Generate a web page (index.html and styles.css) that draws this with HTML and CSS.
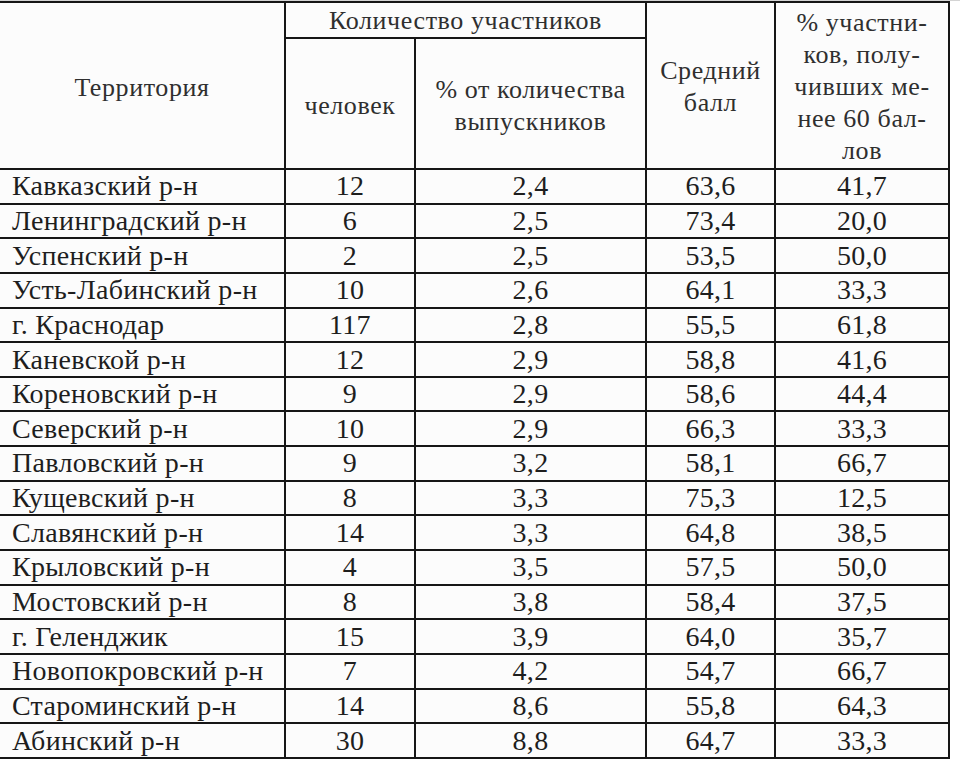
FILE: index.html
```html
<!DOCTYPE html>
<html>
<head>
<meta charset="utf-8">
<title>Results</title>
<link rel="stylesheet" href="styles.css">
</head>
<body>
<div class="sheet">
  <div class="hc h-terr">Территория</div>
  <div class="hc h-group">Количество участников</div>
  <div class="hc h-avg">Средний<br>балл</div>
  <div class="hc h-low">% участни-<br>ков, полу-<br>чивших ме-<br>нее 60 бал-<br>лов</div>
  <div class="hc h-num">человек</div>
  <div class="hc h-pct">% от количества<br>выпускников</div>

  <div class="terr">Кавказский р-н</div><div class="val">12</div><div class="val">2,4</div><div class="val">63,6</div><div class="val">41,7</div>
  <div class="terr">Ленинградский р-н</div><div class="val">6</div><div class="val">2,5</div><div class="val">73,4</div><div class="val">20,0</div>
  <div class="terr">Успенский р-н</div><div class="val">2</div><div class="val">2,5</div><div class="val">53,5</div><div class="val">50,0</div>
  <div class="terr">Усть-Лабинский р-н</div><div class="val">10</div><div class="val">2,6</div><div class="val">64,1</div><div class="val">33,3</div>
  <div class="terr">г. Краснодар</div><div class="val">117</div><div class="val">2,8</div><div class="val">55,5</div><div class="val">61,8</div>
  <div class="terr">Каневской р-н</div><div class="val">12</div><div class="val">2,9</div><div class="val">58,8</div><div class="val">41,6</div>
  <div class="terr">Кореновский р-н</div><div class="val">9</div><div class="val">2,9</div><div class="val">58,6</div><div class="val">44,4</div>
  <div class="terr">Северский р-н</div><div class="val">10</div><div class="val">2,9</div><div class="val">66,3</div><div class="val">33,3</div>
  <div class="terr">Павловский р-н</div><div class="val">9</div><div class="val">3,2</div><div class="val">58,1</div><div class="val">66,7</div>
  <div class="terr">Кущевский р-н</div><div class="val">8</div><div class="val">3,3</div><div class="val">75,3</div><div class="val">12,5</div>
  <div class="terr">Славянский р-н</div><div class="val">14</div><div class="val">3,3</div><div class="val">64,8</div><div class="val">38,5</div>
  <div class="terr">Крыловский р-н</div><div class="val">4</div><div class="val">3,5</div><div class="val">57,5</div><div class="val">50,0</div>
  <div class="terr">Мостовский р-н</div><div class="val">8</div><div class="val">3,8</div><div class="val">58,4</div><div class="val">37,5</div>
  <div class="terr">г. Геленджик</div><div class="val">15</div><div class="val">3,9</div><div class="val">64,0</div><div class="val">35,7</div>
  <div class="terr">Новопокровский р-н</div><div class="val">7</div><div class="val">4,2</div><div class="val">54,7</div><div class="val">66,7</div>
  <div class="terr">Староминский р-н</div><div class="val">14</div><div class="val">8,6</div><div class="val">55,8</div><div class="val">64,3</div>
  <div class="terr">Абинский р-н</div><div class="val">30</div><div class="val">8,8</div><div class="val">64,7</div><div class="val">33,3</div>
</div>
</body>
</html>
```
FILE: styles.css
```css
html, body {
  margin: 0;
  padding: 0;
  background: #ffffff;
}

body {
  border-top: 1px solid #d4d4d4;
  font-family: "Liberation Serif", Tinos, "Times New Roman", FreeSerif, serif;
}

.sheet {
  display: grid;
  grid-template-columns: 284px 128px 229px 127px 172px;
  grid-template-rows: 34px 129px repeat(17, 32.65px);
  gap: 2px;
  padding: 2px 2px 2px 0;
  width: 950px;
  box-sizing: border-box;
  background: #161616;
  font-family: "Liberation Serif", Tinos, "Times New Roman", FreeSerif, serif;
}

.sheet > div {
  background: #fcfcfc;
  display: flex;
  align-items: center;
}

.hc {
  font-family: "Liberation Serif", Tinos, "Times New Roman", FreeSerif, serif;
  justify-content: center;
  text-align: center;
  font-size: 26px;
  line-height: 32px;
  letter-spacing: 0.6px;
  color: #2f2f2f;
}

.h-terr { grid-column: 1; grid-row: 1 / 3; padding-top: 4px; }
.h-group { grid-column: 2 / 4; grid-row: 1; padding-top: 2px; }
.h-avg { grid-column: 4; grid-row: 1 / 3; padding-top: 2px; }
.h-low { grid-column: 5; grid-row: 1 / 3; padding-top: 2px; }
.h-num { grid-column: 2; grid-row: 2; padding-top: 4px; }
.h-pct { grid-column: 3; grid-row: 2; padding-top: 4px; }

.terr,
.val {
  font-family: "Liberation Serif", Tinos, "Times New Roman", FreeSerif, serif;
  font-size: 28px;
  line-height: 30px;
  color: #1e1e1e;
}

.terr {
  justify-content: flex-start;
  padding-left: 12px;
  letter-spacing: 0.3px;
}

.val {
  justify-content: center;
  letter-spacing: 0.3px;
}
```
